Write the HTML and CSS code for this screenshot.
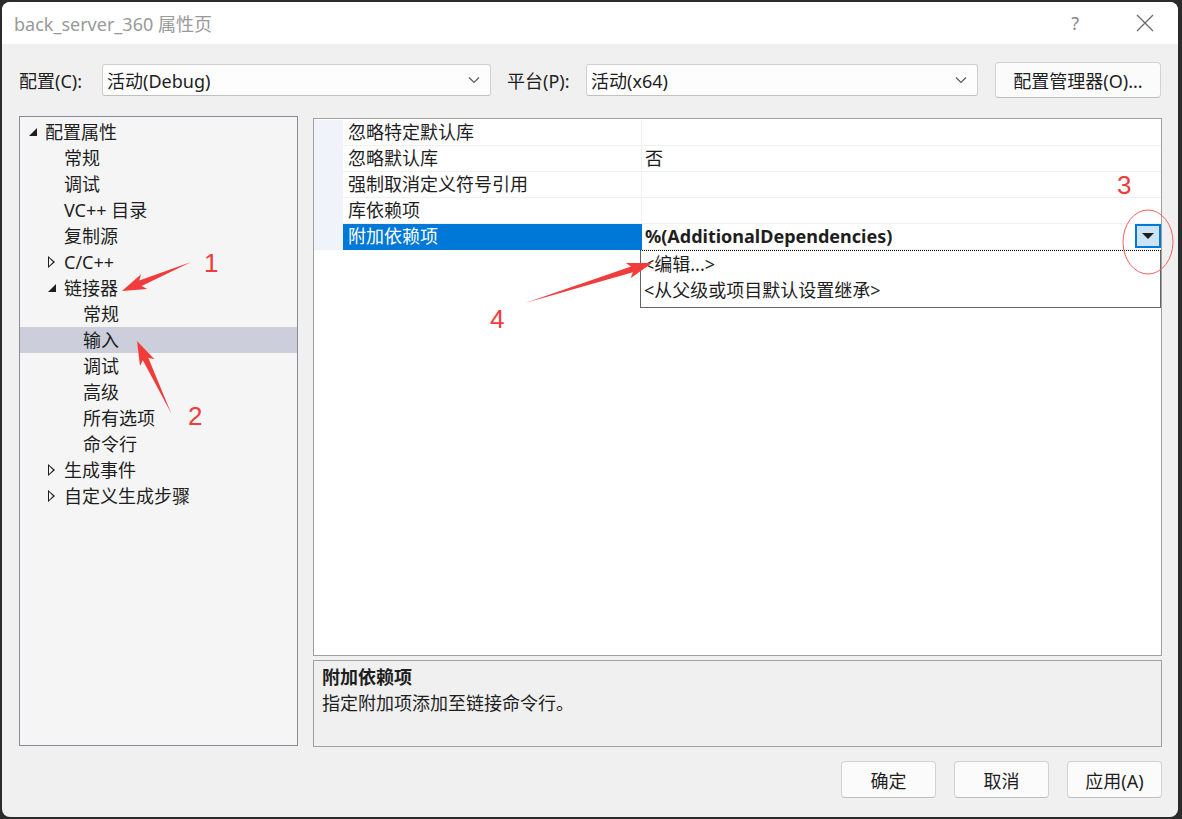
FILE: index.html
```html
<!DOCTYPE html>
<html>
<head>
    <title>back_server_360 属性页</title>
    <link rel="stylesheet" href="styles.css">
</head>
<body>
<div class="dialog">
    <div class="titlebar">
        <span class="title">back_server_360 属性页</span>
        <span class="help">?</span>
        <svg class="close" width="18" height="18" viewBox="0 0 18 18"><path d="M1 1L17 17M17 1L1 17" stroke="#6b6b6b" stroke-width="1.3" fill="none"/></svg>
    </div>

    <div class="config-row">
        <span class="label">配置(C):</span>
        <div class="combo combo-config">
            <span>活动(Debug)</span>
            <svg class="chev" width="12" height="8" viewBox="0 0 12 8"><path d="M1 1.5L6 6.5L11 1.5" stroke="#555" stroke-width="1.1" fill="none"/></svg>
        </div>
        <span class="label label-platform">平台(P):</span>
        <div class="combo combo-platform">
            <span>活动(x64)</span>
            <svg class="chev" width="12" height="8" viewBox="0 0 12 8"><path d="M1 1.5L6 6.5L11 1.5" stroke="#555" stroke-width="1.1" fill="none"/></svg>
        </div>
        <button class="btn btn-manager">配置管理器(O)...</button>
    </div>

    <div class="main">
        <div class="tree">
            <div class="node lvl0"><span class="tri open"></span>配置属性</div>
            <div class="node lvl1">常规</div>
            <div class="node lvl1">调试</div>
            <div class="node lvl1">VC++ 目录</div>
            <div class="node lvl1">复制源</div>
            <div class="node lvl1 has"><span class="tri closed"></span>C/C++</div>
            <div class="node lvl1 has"><span class="tri open"></span>链接器</div>
            <div class="node lvl2">常规</div>
            <div class="node lvl2 selected">输入</div>
            <div class="node lvl2">调试</div>
            <div class="node lvl2">高级</div>
            <div class="node lvl2">所有选项</div>
            <div class="node lvl2">命令行</div>
            <div class="node lvl1 has"><span class="tri closed"></span>生成事件</div>
            <div class="node lvl1 has"><span class="tri closed"></span>自定义生成步骤</div>
        </div>

        <div class="right">
            <div class="grid">
                <div class="prop"><div class="gutter"></div><div class="name">忽略特定默认库</div><div class="value"></div></div>
                <div class="prop"><div class="gutter"></div><div class="name">忽略默认库</div><div class="value">否</div></div>
                <div class="prop"><div class="gutter"></div><div class="name">强制取消定义符号引用</div><div class="value"></div></div>
                <div class="prop"><div class="gutter"></div><div class="name">库依赖项</div><div class="value"></div></div>
                <div class="prop active">
                    <div class="gutter"></div>
                    <div class="name">附加依赖项</div>
                    <div class="value">%(AdditionalDependencies)
                        <span class="drop-btn">
                            <svg width="12" height="7" viewBox="0 0 12 7"><path d="M0 0H12L6 6Z" fill="#1e1e1e"/></svg>
                        </span>
                    </div>
                </div>
                <div class="drop-list">
                    <div class="item">&lt;编辑...&gt;</div>
                    <div class="item">&lt;从父级或项目默认设置继承&gt;</div>
                </div>
            </div>
            <div class="desc">
                <div class="desc-title">附加依赖项</div>
                <div class="desc-text">指定附加项添加至链接命令行。</div>
            </div>
        </div>
    </div>

    <div class="footer">
        <button class="btn btn-foot">确定</button>
        <button class="btn btn-foot">取消</button>
        <button class="btn btn-foot">应用(A)</button>
    </div>
</div>

<!-- red marks drawn on top of the screenshot -->
<svg class="marks" width="1182" height="819" viewBox="0 0 1182 819">
    <g fill="#f23b3b" stroke="none">
        <!-- each arrow: tip at origin, pointing along +x, tail at -length -->
        <path transform="translate(122 291) rotate(157.2)" d="M0 0L-24 -8L-20 -3L-75 0L-20 3L-24 8Z"/>
        <path transform="translate(137 341) rotate(-115.3)" d="M0 0L-24 -8L-20 -3L-80 0L-20 3L-24 8Z"/>
        <path transform="translate(652 263) rotate(-17.5)" d="M0 0L-25 -8L-21 -3L-133 0L-21 3L-25 8Z"/>
    </g>
    <g fill="#f23b3b" font-family="'Liberation Sans', Arial, sans-serif" font-size="26">
        <text x="204" y="272">1</text>
        <text x="188" y="425">2</text>
        <text x="1117" y="194">3</text>
        <text x="490" y="328">4</text>
    </g>
    <ellipse cx="1148" cy="242" rx="25" ry="32" fill="none" stroke="#f06060" stroke-width="1"/>
</svg>
</body>
</html>
```

FILE: styles.css
```css
body { margin: 0; background: #2b2b2b; font-family: "Noto Sans", "Noto Sans CJK SC", sans-serif; font-size: 18px; color: #1e1e1e; }
.dialog { position: relative; margin: 2px 4px 0 2px; width: 1176px; height: 815px; background: #f0f0f0; border-radius: 8px; overflow: hidden; }

.titlebar { height: 42px; background: #fff; display: flex; align-items: center; padding-left: 12px; }
.title { color: #999; font-size: 18px; flex: 1; }
.help { color: #888; font-size: 18px; margin-right: 57px; }
.close { margin-right: 24px; }

.config-row { display: flex; align-items: center; height: 36px; margin-top: 18px; padding-left: 17px; }
.label { width: 83px; }
.label-platform { width: 79px; margin-left: 16px; }
.combo { height: 32px; box-sizing: border-box; background: #fdfdfd; border: 1px solid #d0d0d0; border-bottom-color: #c0c0c0; border-radius: 3px; display: flex; align-items: center; justify-content: space-between; padding: 0 10px 0 4px; }
.combo-config { width: 389px; }
.combo-platform { width: 392px; }

.btn { font-family: inherit; font-size: 18px; color: #1e1e1e; background: #fbfbfb; border: 1px solid #d2d2d2; border-bottom-color: #bdbdbd; border-radius: 4px; padding: 0; }
.btn-manager { width: 166px; height: 36px; margin-left: 17px; }

.main { display: flex; align-items: flex-start; margin-top: 18px; padding-left: 17px; }
.tree { width: 279px; height: 630px; box-sizing: border-box; border: 1px solid #8a8a90; background: #f5f5f5; padding-top: 2px; }
.node { height: 26px; line-height: 26px; position: relative; white-space: nowrap; }
.lvl0 { padding-left: 25px; }
.lvl1 { padding-left: 44px; }
.lvl2 { padding-left: 63px; }
.selected { background: #cccedb; }
.tri { position: absolute; top: 9px; width: 0; height: 0; }
.lvl0 .tri { left: 9px; }
.lvl1 .tri { left: 28px; }
.tri.open { border-left: 8px solid transparent; border-bottom: 8px solid #1e1e1e; }
.tri.closed { top: 7px; width: 5px; height: 10px; border: 0; }
.tri.closed::before { content: ""; position: absolute; left: 0; top: 0; border-top: 6px solid transparent; border-bottom: 6px solid transparent; border-left: 7px solid #1e1e1e; }
.tri.closed::after { content: ""; position: absolute; left: 1px; top: 2px; border-top: 4px solid transparent; border-bottom: 4px solid transparent; border-left: 4.5px solid #f5f5f5; }

.right { margin-left: 15px; margin-top: 2px; width: 849px; }
.grid { position: relative; height: 538px; box-sizing: border-box; border: 1px solid #a0a0a0; background: #fff; padding-top: 1px; }
.prop { display: flex; height: 26px; line-height: 25px; }
.gutter { width: 29px; background: #f0f4fa; }
.name { width: 293px; padding-left: 5px; border-bottom: 1px solid #f0f0f0; border-right: 1px solid #f0f0f0; white-space: nowrap; }
.value { flex: 1; padding-left: 3px; border-bottom: 1px solid #f0f0f0; position: relative; }
.active .name { background: #0078d7; color: #fff; border-color: #0078d7; }
.active .value { font-weight: bold; }
.drop-btn { position: absolute; right: 0; top: 0; width: 26px; height: 24px; box-sizing: border-box; border: 2px solid #0078d7; background: #cce4f7; display: flex; align-items: center; justify-content: center; }

.drop-list { position: absolute; left: 326px; top: 131px; width: 521px; height: 58px; box-sizing: border-box; border: 1px solid #646464; border-top: 1px dotted #000; background: #fff; padding: 0 0 0 3px; }
.item { height: 26px; line-height: 26px; }

.desc { margin-top: 4px; height: 87px; box-sizing: border-box; border: 1px solid #a0a0a0; background: #f0f0f0; padding: 3px 8px; }
.desc-title { font-weight: bold; line-height: 26px; }
.desc-text { line-height: 26px; }

.footer { display: flex; justify-content: flex-end; gap: 18px; padding-right: 16px; margin-top: 14px; }
.btn-foot { width: 95px; height: 37px; }

.marks { position: absolute; left: 0; top: 0; pointer-events: none; }
```
